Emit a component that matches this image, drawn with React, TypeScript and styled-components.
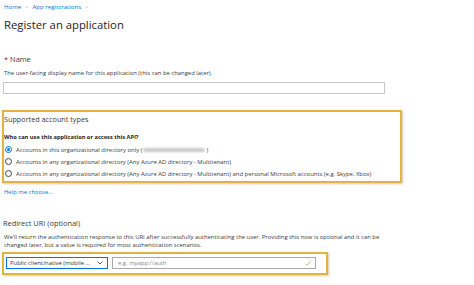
import React from 'react';
import styled, { createGlobalStyle } from 'styled-components';

const GlobalStyle = createGlobalStyle`
  html, body {
    margin: 0;
    padding: 0;
    background: #ffffff;
  }
  body {
    font-family: 'Open Sans', 'Liberation Sans', sans-serif;
    color: #323130;
  }
`;

const Page = styled.div`
  width: 474px;
  height: 285px;
  overflow: hidden;
  padding: 3px 0 0 4px;
  box-sizing: border-box;
`;

const Breadcrumb = styled.div`
  display: flex;
  align-items: center;
  gap: 4px;
  font-size: 6.1px;
  line-height: 8px;
  color: #0078d4;
`;

const Chevron = styled.span`
  color: #a8a8a8;
  font-size: 5.6px;
`;

const Title = styled.h1`
  margin: 6px 0 0 0;
  font-size: 11.3px;
  line-height: 16px;
  font-weight: 400;
  color: #252423;
`;

const FieldLabel = styled.div`
  margin-top: 21px;
  font-size: 7.4px;
  line-height: 10px;
  color: #3b3a39;
`;

const Required = styled.span`
  color: #a4262c;
  margin-right: 2px;
`;

const Hint = styled.div<{ $top?: number }>`
  margin-top: ${(p) => p.$top ?? 0}px;
  font-size: 5.9px;
  line-height: 8.5px;
  color: #3b3a39;
  white-space: nowrap;
`;

const TextBox = styled.div`
  margin-top: 4px;
  margin-left: -1px;
  width: 382px;
  height: 12px;
  border: 1px solid #c8c8c8;
  box-sizing: border-box;
  background: #fff;
`;

const Highlight = styled.div<{ $width: number }>`
  width: ${(p) => p.$width}px;
  border: 2px solid #e3b341;
  box-sizing: border-box;
  box-shadow: 1px 1px 2px rgba(120, 100, 40, 0.35);
  margin-left: -2px;
`;

const SectionBox = styled(Highlight)`
  margin-top: 16px;
  padding: 2px 0 5px 0;
  height: 73px;
`;

const SectionTitle = styled.div`
  font-size: 7.25px;
  line-height: 10px;
  color: #3b3a39;
`;

const Question = styled.div`
  margin-top: 9px;
  font-size: 5.7px;
  line-height: 8px;
  font-weight: 700;
  color: #252423;
`;

const RadioList = styled.div`
  display: flex;
  flex-direction: column;
  gap: 4px;
  margin-top: 5px;
`;

const RadioRow = styled.div`
  display: flex;
  align-items: center;
  gap: 4px;
  font-size: 5.9px;
  line-height: 8px;
  white-space: nowrap;
  color: #3b3a39;
`;

const RadioDot = styled.span<{ $checked?: boolean }>`
  width: 7px;
  height: 7px;
  border-radius: 50%;
  border: 1px solid ${(p) => (p.$checked ? '#0078d4' : '#444')};
  box-sizing: border-box;
  display: inline-flex;
  align-items: center;
  justify-content: center;
  flex-shrink: 0;
  margin-left: 1px;
  &::after {
    content: '';
    width: 3px;
    height: 3px;
    border-radius: 50%;
    background: ${(p) => (p.$checked ? '#0078d4' : 'transparent')};
  }
`;

const Redacted = styled.span`
  display: inline-block;
  width: 62px;
  height: 4px;
  margin: 0 1px;
  vertical-align: middle;
  background: #c9c9c9;
  filter: blur(1.2px);
  border-radius: 2px;
`;

const Link = styled.div`
  margin-top: 5px;
  font-size: 5.9px;
  line-height: 8px;
  color: #0078d4;
`;

const SubHeading = styled.div`
  margin-top: 22px;
  font-size: 7.4px;
  line-height: 10px;
  color: #3b3a39;
  margin-left: -1px;
`;

const UriBox = styled(Highlight)`
  margin-top: 2px;
  height: 23px;
  display: flex;
  align-items: center;
  gap: 4px;
  padding: 0 0 0 2px;
`;

const Select = styled.div`
  width: 102px;
  height: 12px;
  border: 1px solid #0078d4;
  box-sizing: border-box;
  display: flex;
  align-items: center;
  justify-content: space-between;
  padding: 0 4px 0 3px;
  font-size: 5.9px;
  color: #323130;
  white-space: nowrap;
  background: #fff;
`;

const UriInput = styled.div`
  width: 204px;
  height: 12px;
  border: 1px solid #a8a8a8;
  box-sizing: border-box;
  display: flex;
  align-items: center;
  justify-content: space-between;
  padding: 0 4px 0 5px;
  font-size: 5.9px;
  color: #8a8886;
  background: #fff;
`;

const Radios = [
  { checked: true, text: 'Accounts in this organizational directory only', redacted: true },
  { checked: false, text: 'Accounts in any organizational directory (Any Azure AD directory - Multitenant)' },
  {
    checked: false,
    text: 'Accounts in any organizational directory (Any Azure AD directory - Multitenant) and personal Microsoft accounts (e.g. Skype, Xbox)',
  },
];

const App: React.FC = () => {
  return (
    <>
      <GlobalStyle />
      <Page>
        <Breadcrumb>
          <span>Home</span>
          <Chevron>&gt;</Chevron>
          <span>App registrations</span>
          <Chevron>&gt;</Chevron>
        </Breadcrumb>
        <Title>Register an application</Title>

        <FieldLabel>
          <Required>*</Required>Name
        </FieldLabel>
        <Hint $top={5}>The user-facing display name for this application (this can be changed later).</Hint>
        <TextBox />

        <SectionBox $width={400}>
          <SectionTitle>Supported account types</SectionTitle>
          <Question>Who can use this application or access this API?</Question>
          <RadioList>
            {Radios.map((r, i) => (
              <RadioRow key={i}>
                <RadioDot $checked={r.checked} />
                <span>
                  {r.text}
                  {r.redacted && (
                    <>
                      {' '}(<Redacted />)
                    </>
                  )}
                </span>
              </RadioRow>
            ))}
          </RadioList>
        </SectionBox>
        <Link>Help me choose...</Link>

        <SubHeading>Redirect URI (optional)</SubHeading>
        <Hint $top={5}>
          We'll return the authentication response to this URI after successfully authenticating the user. Providing this now is optional and it can be
        </Hint>
        <Hint>changed later, but a value is required for most authentication scenarios.</Hint>
        <UriBox $width={326}>
          <Select>
            <span>Public client/native (mobile ...</span>
            <svg width="6" height="4" viewBox="0 0 6 4">
              <path d="M0.5 0.5 L3 3 L5.5 0.5" fill="none" stroke="#323130" strokeWidth="0.8" />
            </svg>
          </Select>
          <UriInput>
            <span>e.g. myapp://auth</span>
            <svg width="6" height="5" viewBox="0 0 6 5">
              <path d="M0.5 2.8 L2 4.2 L5.5 0.6" fill="none" stroke="#7fba5a" strokeWidth="0.8" />
            </svg>
          </UriInput>
        </UriBox>
      </Page>
    </>
  );
};

export default App;
